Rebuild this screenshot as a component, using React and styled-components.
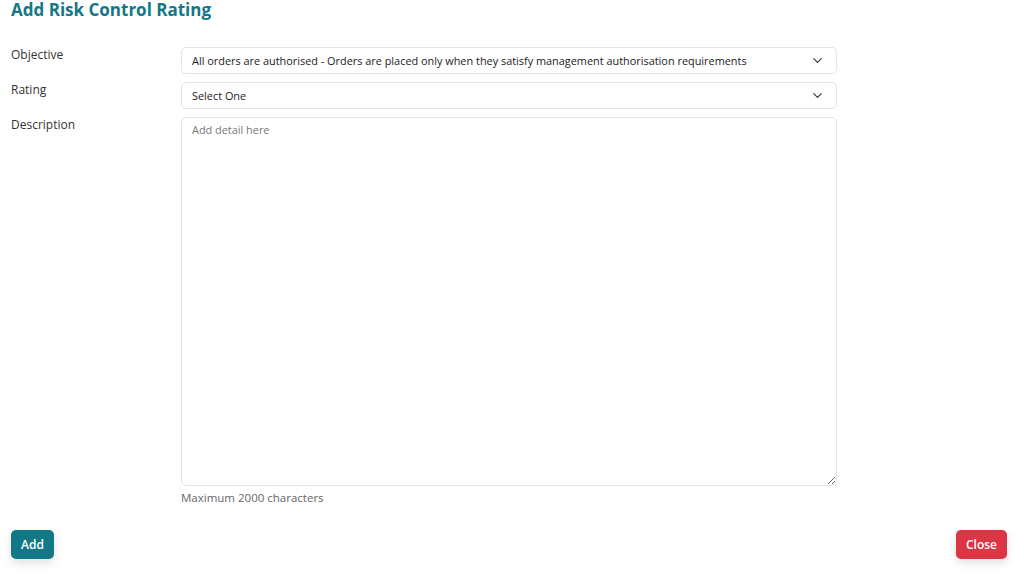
import React, { useState } from "react";
import styled, { createGlobalStyle } from "styled-components";
import { ChevronDown } from "lucide-react";

const GlobalStyle = createGlobalStyle`
  html, body {
    margin: 0;
    padding: 0;
    background: #ffffff;
  }
  body {
    font-family: "Open Sans", "Liberation Sans", sans-serif;
    color: #333;
  }
  * { box-sizing: border-box; }
`;

const Page = styled.div`
  width: 1024px;
  height: 583px;
  padding: 0 17px 0 11px;
  display: flex;
  flex-direction: column;
`;

const Title = styled.h1`
  margin: 0;
  font-size: 17px;
  line-height: 20px;
  font-weight: 700;
  color: #137885;
`;

const Form = styled.div`
  display: grid;
  grid-template-columns: 170px 656px;
  row-gap: 8px;
  margin-top: 27px;
`;

const Label = styled.label`
  font-size: 12px;
  line-height: 16px;
  color: #333;
`;

const SelectBox = styled.div`
  height: 27px;
  border: 1px solid #e4e4e4;
  border-radius: 5px;
  display: flex;
  align-items: center;
  justify-content: space-between;
  padding: 0 11px 0 10px;
  font-size: 10.9px;
  color: #222;
  cursor: pointer;
  & svg {
    color: #333;
    flex-shrink: 0;
  }
`;

const TextArea = styled.textarea`
  height: 369px;
  border: 1px solid #e4e4e4;
  border-radius: 5px;
  padding: 5px 10px;
  font-family: inherit;
  font-size: 10.9px;
  line-height: 14px;
  color: #222;
  resize: vertical;
  outline: none;
  &::placeholder {
    color: #777;
  }
`;

const Hint = styled.div`
  grid-column: 2;
  margin-top: -4px;
  font-size: 11.5px;
  color: #666;
`;

const Footer = styled.div`
  display: flex;
  justify-content: space-between;
  margin-top: 25px;
`;

const Button = styled.button`
  height: 29px;
  padding: 0 ${(p) => p.$pad}px;
  border: none;
  border-radius: 5px;
  background: ${(p) => p.$bg};
  color: #fff;
  font-family: inherit;
  font-size: 12px;
  font-weight: 600;
  box-shadow: 0 4px 10px rgba(0, 0, 0, 0.12);
  cursor: pointer;
`;

function Select({ value }) {
  return (
    <SelectBox>
      <span>{value}</span>
      <ChevronDown size={15} strokeWidth={1.8} />
    </SelectBox>
  );
}

export default function App() {
  const [detail, setDetail] = useState("");
  return (
    <>
      <GlobalStyle />
      <Page>
        <Title>Add Risk Control Rating</Title>
        <Form>
          <Label>Objective</Label>
          <Select value="All orders are authorised - Orders are placed only when they satisfy management authorisation requirements" />
          <Label>Rating</Label>
          <Select value="Select One" />
          <Label>Description</Label>
          <TextArea
            placeholder="Add detail here"
            value={detail}
            onChange={(e) => setDetail(e.target.value)}
          />
          <Hint>Maximum 2000 characters</Hint>
        </Form>
        <Footer>
          <Button $bg="#137885" $pad={10}>Add</Button>
          <Button $bg="#dc3545" $pad={10}>Close</Button>
        </Footer>
      </Page>
    </>
  );
}
